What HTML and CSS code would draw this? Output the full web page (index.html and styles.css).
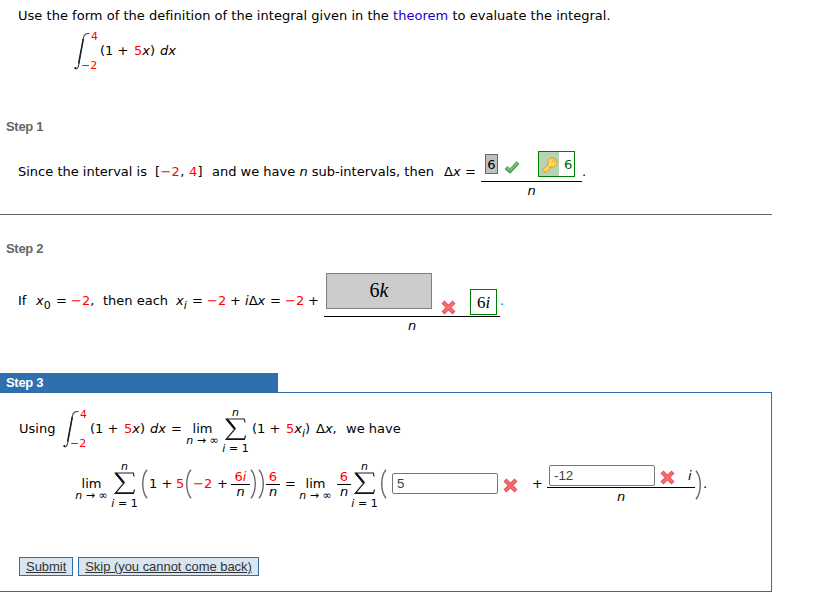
FILE: index.html
```html
<!DOCTYPE html>
<html lang="en">
<head>
    <meta charset="UTF-8">
    <meta name="viewport" content="width=device-width, initial-scale=1.0">
    <title>Definition of the Integral</title>
    <link rel="stylesheet" href="styles.css">
</head>
<body>
    <svg class="defs">
        <symbol id="int" viewBox="0 0 17 38">
            <path d="M1 36.500c2 .8 3.300-.6 3.900-4.500L9.300 6.500C10 2.500 12.500.8 15.500 1.800" fill="none" stroke="#444" stroke-width="1.100"/>
            <circle cx="1.300" cy="36" r="1" fill="#111"/>
            <path d="M4.600 31.500L9.300 7" stroke="#222" stroke-width="1.500"/>
        </symbol>
        <symbol id="sum" viewBox="0 0 21 23">
            <path d="M20 4.500L19.300 1H1.200L10 11 1 21.500h18.500l1-4" fill="none" stroke="#222" stroke-width="1.200"/>
            <path d="M2 1.200L10 11" stroke="#111" stroke-width="2.200"/>
            <path d="M2 21h17.500" stroke="#111" stroke-width="1.500"/>
        </symbol>
        <symbol id="open" viewBox="0 0 7 30">
            <path d="M6 .8C.3 7.500.3 22 6 29.200" fill="none" stroke="#666" stroke-width="1.400"/>
        </symbol>
        <symbol id="close" viewBox="0 0 7 30">
            <path d="M1 .8C6.700 7.500 6.700 22 1 29.200" fill="none" stroke="#666" stroke-width="1.400"/>
        </symbol>
        <symbol id="wrong" viewBox="0 0 15 15">
            <path d="M2 2l11 11M13 2L2 13" stroke="#e0474f" stroke-width="4.200"/>
            <path d="M2.500 2.500l10 10M12.500 2.500l-10 10" stroke="#fb6a6c" stroke-width="2.600"/>
        </symbol>
        <symbol id="right" viewBox="0 0 16 14">
            <path d="M2 7.500L6 11 14 2.500" fill="none" stroke="#3f964a" stroke-width="4"/>
            <path d="M2.300 7.200L6 10.400 13.600 2.500" fill="none" stroke="#6fc274" stroke-width="2.400"/>
        </symbol>
        <symbol id="key" viewBox="0 0 17 17">
            <path d="M8.500 8.500L2 14.500M4.500 12.500l2 2M6.500 10.500l2 2" stroke="#d98e1c" stroke-width="3.600"/>
            <circle cx="11.300" cy="5.500" r="4.600" fill="#ffd55a" stroke="#e09a24"/>
            <path d="M9.500 7.500L2.200 14.200M4.800 12.500l1.700 1.700M6.800 10.600l1.500 1.500" stroke="#ffdc6b" stroke-width="2"/>
            <circle cx="12.700" cy="4" r="1.200" fill="#fff6d0" stroke="#d98e1c" stroke-width=".7"/>
        </symbol>
    </svg>

    <div class="question">
        <p class="prompt">Use the form of the definition of the integral given in the <a class="theorem">theorem</a> to evaluate the integral.</p>
        <div class="row given">
            <div class="integral">
                <svg class="int-sign"><use href="#int"/></svg>
                <div class="limits red"><span class="upper">4</span><span>−2</span></div>
            </div>
            <span class="w34">(1 +</span><span class="w26"><span class="red">5</span><i>x</i>)</span><i>dx</i>
        </div>
    </div>

    <h3 class="step step1">Step 1</h3>
    <div class="row interval">
        <span class="since">Since the interval is</span>
        <span class="range">[<span class="red">−2</span>, <span class="red">4</span>]</span>
        <span class="and-we">and we have <i>n</i> sub-intervals, then</span>
        <span class="w22">Δ<i>x</i></span>
        <span class="op w15">=</span>
        <div class="fraction delta">
            <div class="numerator">
                <span class="answer">6</span>
                <svg class="check"><use href="#right"/></svg>
                <span class="key-box"><span class="key-bg"><svg class="key"><use href="#key"/></svg></span><span class="key-value">6</span></span>
            </div>
            <i>n</i>
        </div>
        <span>.</span>
    </div>
    <div class="divider"></div>

    <h3 class="step step2">Step 2</h3>
    <div class="row each">
        <span class="w18">If</span>
        <span class="w21"><i>x</i><sub>0</sub></span>
        <span class="op w14">=</span>
        <span class="w32"><span class="red">−2</span>,</span>
        <span class="w73">then each</span>
        <span class="w17"><i>x</i><sub><i>i</i></sub></span>
        <span class="op w14">=</span>
        <span class="red w23">−2</span>
        <span class="w15">+</span>
        <span class="w26"><i>i</i>Δ<i>x</i></span>
        <span class="op w14">=</span>
        <span class="red w23">−2</span>
        <span class="w16">+</span>
        <div class="fraction wrong-answer">
            <div class="numerator">
                <span class="big-answer">6<i>k</i></span>
                <svg class="cross"><use href="#wrong"/></svg>
                <span class="correct">6<i>i</i></span>
            </div>
            <i>n</i>
        </div>
        <span class="teal">.</span>
    </div>

    <h3 class="step-active">Step 3</h3>
    <div class="panel">
        <div class="row using">
            <span class="w44">Using</span>
            <div class="integral using-integral">
                <svg class="int-sign"><use href="#int"/></svg>
                <div class="limits red"><span class="upper">4</span><span>−2</span></div>
            </div>
            <span class="w34">(1 +</span><span class="w26"><span class="red">5</span><i>x</i>)</span><i class="w22">dx</i><span class="op w14">=</span>
            <div class="lim"><span>lim</span><small><i>n</i> → ∞</small></div>
            <div class="sum"><i>n</i><svg><use href="#sum"/></svg><span><i>i</i> = 1</span></div>
            <span class="w34 after-sum">(1 +</span><span class="w30"><span class="red">5</span><i>x</i><sub><i>i</i></sub>)</span>
            <span class="w30">Δ<i>x</i>,</span>
            <span>we have</span>
        </div>

        <div class="row work">
            <div class="lim"><span>lim</span><small><i>n</i> → ∞</small></div>
            <div class="sum"><i>n</i><svg><use href="#sum"/></svg><span><i>i</i> = 1</span></div>
            <svg class="paren first-paren"><use href="#open"/></svg>
            <span class="w27">1 +</span><span class="red w9">5</span>
            <svg class="paren"><use href="#open"/></svg>
            <span class="red w24">−2</span><span class="w14">+</span>
            <div class="small-frac wide"><span class="red">6<i>i</i></span><i>n</i></div>
            <svg class="paren"><use href="#close"/></svg>
            <svg class="paren"><use href="#close"/></svg>
            <div class="small-frac"><span class="red">6</span><i>n</i></div>
            <span class="equals">=</span>
            <div class="lim"><span>lim</span><small><i>n</i> → ∞</small></div>
            <div class="small-frac outside"><span class="red">6</span><i>n</i></div>
            <div class="sum tight"><i>n</i><svg><use href="#sum"/></svg><span><i>i</i> = 1</span></div>
            <svg class="paren input-paren"><use href="#open"/></svg>
            <input class="field" type="text" value="5">
            <svg class="cross field-cross"><use href="#wrong"/></svg>
            <span class="plus">+</span>
            <div class="fraction last">
                <div class="numerator">
                    <input class="field" type="text" value="-12">
                    <svg class="cross"><use href="#wrong"/></svg>
                    <i class="index">i</i>
                </div>
                <i>n</i>
            </div>
            <svg class="paren last-paren"><use href="#close"/></svg>
            <span>.</span>
        </div>

        <div class="buttons">
            <a class="button">Submit</a>
            <a class="button">Skip (you cannot come back)</a>
        </div>
    </div>
</body>
</html>
```

FILE: styles.css
```css
* {
    box-sizing: border-box;
}
body {
    margin: 0;
    height: 600px;
    overflow: hidden;
    background: white;
    color: black;
    font-family: Verdana, "DejaVu Sans", sans-serif;
    font-size: 13px;
    line-height: 15px;
}
.defs {
    display: none;
}
svg {
    display: block;
    flex: none;
}
.question {
    height: 111px;
    padding: 8px 0 0 18px;
}
.prompt {
    margin: 0;
    white-space: nowrap;
    letter-spacing: 0.025px;
}
.theorem {
    color: #1400c8;
}
.red {
    color: #ff0000;
}
.teal {
    color: #007a8a;
}

/* math rows */
.row {
    display: flex;
    align-items: flex-start;
    white-space: nowrap;
}
.row > * {
    flex: none;
}
sub {
    font-size: 11px;
    line-height: 0;
    vertical-align: -4px;
}
.op {
    text-indent: -1px;
}
.given {
    margin-left: 56px;
    padding-top: 20px;
}
.integral {
    display: flex;
    width: 26px;
    height: 42px;
    margin-top: -13px;
}
.using-integral {
    width: 27px;
}
.int-sign {
    width: 17px;
    height: 38px;
    margin-top: 2px;
}
.limits {
    display: flex;
    flex-direction: column;
    gap: 16px;
    margin-left: -10px;
    font-size: 11px;
    line-height: 13px;
}
.upper {
    padding-left: 10px;
}
.w9 { width: 9px; }
.w14 { width: 14px; }
.w15 { width: 15px; }
.w16 { width: 16px; }
.w17 { width: 17px; }
.w18 { width: 18px; }
.w21 { width: 21px; }
.w22 { width: 22px; }
.w23 { width: 23px; }
.w24 { width: 24px; }
.w26 { width: 26px; }
.w27 { width: 27px; }
.w30 { width: 30px; }
.w32 { width: 32px; }
.w34 { width: 34px; }
.w44 { width: 44px; }
.w73 { width: 73px; }

/* steps */
.step {
    height: 16px;
    margin: 0;
    padding-left: 6px;
    color: #666;
    font: bold 13px/16px Arial, "Liberation Sans", sans-serif;
    letter-spacing: -0.3px;
}
.step1 {
    margin-top: 8px;
}
.interval {
    height: 79px;
    padding: 29px 0 0 18px;
}
.since {
    width: 137px;
}
.range {
    width: 57px;
    letter-spacing: 0.3px;
}
.and-we {
    width: 232px;
}
.fraction {
    display: flex;
    flex-direction: column;
    align-items: center;
}
.numerator {
    display: flex;
    width: 100%;
    border-bottom: 1px solid black;
}
.delta {
    width: 101px;
    margin-top: -13px;
}
.delta > i {
    margin-top: 1px;
}
.delta .numerator {
    height: 31px;
    padding-left: 4px;
}
.answer {
    width: 13px;
    height: 20px;
    margin-top: 3px;
    border: 1px solid #666;
    background: #c0c0c0;
    line-height: 19px;
    text-align: center;
}
.check {
    width: 16px;
    height: 14px;
    margin: 9px 0 0 6px;
}
.key-box {
    display: flex;
    width: 37px;
    height: 26px;
    margin-left: 18px;
    border: 1px solid #008000;
}
.key-bg {
    width: 20px;
    padding: 5px 0 0 2px;
    background: #b5d3b5;
}
.key {
    width: 17px;
    height: 17px;
}
.key-value {
    padding: 5px 0 0 5px;
    color: #006400;
}
.divider {
    width: 772px;
    height: 1px;
    background: #666;
}
.step2 {
    margin-top: 26px;
}
.each {
    height: 116px;
    padding: 36px 0 0 18px;
}
.wrong-answer {
    width: 176px;
    margin-top: -20px;
}
.wrong-answer .numerator {
    height: 44px;
    padding-left: 2px;
}
.wrong-answer > i {
    margin-top: 1px;
}
.big-answer {
    width: 106px;
    height: 36px;
    border: 1px solid #808080;
    background: #ccc;
    font: 20px/33px "Liberation Serif", serif;
    text-align: center;
}
.cross {
    width: 15px;
    height: 15px;
}
.wrong-answer .cross {
    margin: 27px 0 0 9px;
}
.correct {
    width: 27px;
    height: 26px;
    margin: 16px 0 0 14px;
    border: 1px solid #008000;
    font: 17px/25px "Liberation Serif", serif;
    text-align: center;
}
.step-active {
    width: 278px;
    height: 19px;
    margin: 0;
    padding-left: 6px;
    background: #2f6fad;
    color: white;
    font: bold 13px/19px Arial, "Liberation Sans", sans-serif;
    letter-spacing: -0.3px;
}
.panel {
    width: 772px;
    height: 200px;
    padding-left: 19px;
    border: 1px solid #336fa6;
    border-left: none;
}
.using {
    height: 66px;
    padding-top: 28px;
}

/* limits and sums */
.lim {
    display: flex;
    flex-direction: column;
    align-items: center;
    width: 33px;
}
.lim small {
    margin-top: -1px;
    font-size: 11px;
    line-height: 11px;
}
.sum {
    display: flex;
    flex-direction: column;
    align-items: center;
    width: 27px;
    margin: -16px 0 0 3px;
    font-size: 11px;
    line-height: 13px;
}
.sum svg {
    width: 21px;
    height: 23px;
    margin: -1px 0 1px;
}
.using .sum {
    margin-top: -15px;
}
.after-sum {
    margin-left: 3px;
}
.work {
    height: 98px;
    padding: 17px 0 0 56px;
}
.work .sum svg {
    margin-bottom: 2px;
}
.paren {
    width: 7px;
    height: 30px;
    margin: -7px 1px 0 0;
}
.first-paren {
    margin-left: 3px;
}
.small-frac {
    display: flex;
    flex-direction: column;
    align-items: center;
    width: 14px;
    margin-top: -7px;
}
.small-frac > :first-child {
    width: 100%;
    height: 16px;
    border-bottom: 1px solid black;
    text-align: center;
}
.small-frac > i {
    margin-top: -1px;
}
.wide {
    width: 19px;
}
.equals {
    width: 14px;
    margin-left: 5px;
}
.outside {
    margin-left: 5px;
}
.tight {
    margin-left: 0;
}
.input-paren {
    margin-left: 2px;
}
.field {
    width: 106px;
    height: 21px;
    padding: 0 4px;
    border: 1px solid #767676;
    border-radius: 2px;
    background: white;
    color: #345;
    font: 13.33px Arial, "Liberation Sans", sans-serif;
}
.work > .field {
    margin: -3px 0 0 4px;
}
.field-cross {
    margin: 2px 0 0 5px;
}
.plus {
    margin-left: 14px;
    width: 15px;
}
.last {
    width: 148px;
    margin-top: -11px;
}
.last .numerator {
    height: 23px;
    padding-left: 2px;
}
.last .cross {
    margin: 5px 0 0 5px;
}
.last .index {
    margin: 3px 0 0 13px;
}
.last > i {
    margin-top: 1px;
}
.last-paren {
    margin-top: -6px;
}

.buttons {
    display: flex;
    gap: 5px;
}
.button {
    height: 19px;
    padding: 0 6px;
    border: 1px solid #336fa6;
    background: #d9e5f0;
    color: #333;
    font: 13px/18px Arial, "Liberation Sans", sans-serif;
    letter-spacing: -0.04px;
    text-decoration: underline;
}
```
